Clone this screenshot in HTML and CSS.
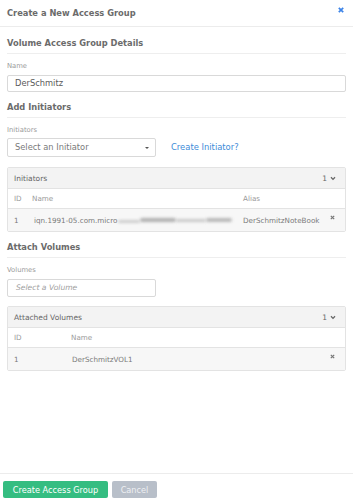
FILE: index.html
```html
<!DOCTYPE html>
<html>
<head>
<meta charset="utf-8">
<link rel="stylesheet" href="styles.css">
</head>
<body>
<div class="dialog">
  <div class="dlg-head">
    <span class="dlg-title">Create a New Access Group</span>
    <svg class="close" width="6" height="6" viewBox="0 0 6 6"><path d="M0.8 0.8 L5.2 5.2 M5.2 0.8 L0.8 5.2" stroke="#3d84e8" stroke-width="1.7"/></svg>
  </div>
  <div class="dlg-body">
    <div class="section-title">Volume Access Group Details</div>
    <div class="label">Name</div>
    <div class="input full">DerSchmitz</div>

    <div class="section-title">Add Initiators</div>
    <div class="label">Initiators</div>
    <div class="row">
      <div class="input select">Select an Initiator<span class="caret"></span></div>
      <a class="link">Create Initiator?</a>
    </div>
    <div class="panel ini-panel">
      <div class="panel-head"><span>Initiators</span><span class="count">1 <svg width="6" height="5" viewBox="0 0 6 5"><path d="M1 1.2 L3 3.4 L5 1.2" fill="none" stroke="#666" stroke-width="1.3"/></svg></span></div>
      <div class="trow cols ini"><span>ID</span><span>Name</span><span>Alias</span><span></span></div>
      <div class="trow data ini"><span>1</span><span class="iqn">iqn.1991-05.com.micro<span class="blur"><span class="b1"></span><span class="b2"></span><span class="b3"></span><span class="b4"></span></span></span><span>DerSchmitzNoteBook</span><svg class="x" width="5" height="5" viewBox="0 0 5 5"><path d="M0.8 0.8 L4.2 4.2 M4.2 0.8 L0.8 4.2" stroke="#777" stroke-width="1.2"/></svg></div>
    </div>

    <div class="section-title">Attach Volumes</div>
    <div class="label">Volumes</div>
    <div class="input select placeholder">Select a Volume</div>
    <div class="panel vol-panel">
      <div class="panel-head"><span>Attached Volumes</span><span class="count">1 <svg width="6" height="5" viewBox="0 0 6 5"><path d="M1 1.2 L3 3.4 L5 1.2" fill="none" stroke="#666" stroke-width="1.3"/></svg></span></div>
      <div class="trow cols vol"><span>ID</span><span>Name</span><span></span></div>
      <div class="trow data vol"><span>1</span><span>DerSchmitzVOL1</span><svg class="x" width="5" height="5" viewBox="0 0 5 5"><path d="M0.8 0.8 L4.2 4.2 M4.2 0.8 L0.8 4.2" stroke="#777" stroke-width="1.2"/></svg></div>
    </div>
  </div>
  <div class="dlg-foot">
    <button class="btn primary">Create Access Group</button>
    <button class="btn cancel">Cancel</button>
  </div>
</div>
</body>
</html>
```
FILE: styles.css
```css
html, body { margin: 0; padding: 0; background: #fff; }
body { font-family: "DejaVu Sans", "Liberation Sans", sans-serif; color: #666; }
.dialog { width: 353px; height: 500px; display: flex; flex-direction: column; }
.dlg-head { height: 27px; border-bottom: 1px solid #ececec; display: flex; align-items: center; justify-content: space-between; padding: 0 9px 0 7px; box-sizing: border-box; }
.dlg-title { font-weight: 700; font-size: 8.3px; color: #6b6b6b; line-height: 12px; }
.close { margin-top: -7px; }
.dlg-body { padding: 1px 7px 0; flex: 1; }
.section-title { font-weight: 700; font-size: 8.3px; color: #6b6b6b; line-height: 12px; padding-top: 9px; padding-bottom: 4px; border-bottom: 1px solid #eeeeee; margin-bottom: 8px; }
.label { font-size: 6.8px; line-height: 9px; color: #9a9a9a; margin-bottom: 3.5px; }
.input { height: 17px; border: 1px solid #d9d9d9; border-radius: 2px; box-sizing: border-box; font-size: 8.3px; color: #5a5a5a; padding-left: 7px; display: flex; align-items: center; }
.input.full { width: 100%; }
.input.select { width: 149px; height: 18.5px; color: #7a7a7a; position: relative; }
.input.placeholder { font-style: italic; color: #a0a0a0; font-size: 7.6px; padding-left: 8px; }
.caret { position: absolute; right: 6px; top: 7.5px; border-left: 2.2px solid transparent; border-right: 2.2px solid transparent; border-top: 2.6px solid #555; }
.row { display: flex; align-items: center; }
.link { color: #3d8bd8; font-size: 8.4px; margin-left: 15px; }
.panel { border: 1px solid #e3e3e3; border-radius: 2px; font-size: 7.2px; color: #7a7a7a; }
.ini-panel { margin-top: 10.5px; }
.vol-panel { margin-top: 9px; }
.panel-head { height: 20px; background: #f3f3f3; display: flex; align-items: center; justify-content: space-between; padding: 0 9px 0 6px; border-bottom: 1px solid #e3e3e3; color: #666; font-size: 7.5px; }
.count { display: flex; align-items: center; gap: 3px; }
.trow { display: grid; align-items: center; padding: 0 6px; }
.trow.ini { grid-template-columns: 18px 211px 1fr 9px; }
.trow.vol { grid-template-columns: 57px 1fr 9px; }
.trow.cols { height: 19px; border-bottom: 1px solid #e3e3e3; color: #9a9a9a; }
.trow.data { height: 22px; background: #f7f7f7; }
.ini.data span:nth-child(2) { padding-left: 2px; }
.vol.data span:nth-child(2) { padding-left: 1px; }
.iqn { display: flex; align-items: center; white-space: nowrap; }
.blur { display: inline-flex; align-items: center; width: 118px; height: 8px; }
.blur span { display: block; background: #a9a9a9; border-radius: 3px; filter: blur(1.4px); }
.b1 { width: 22px; height: 3px; margin-top: 3px; opacity: 0.55; }
.b2 { width: 34px; height: 4px; margin-top: -1px; opacity: 0.9; }
.b3 { width: 30px; height: 3px; margin-top: 1px; opacity: 0.6; }
.b4 { width: 26px; height: 4px; margin-top: 0; opacity: 0.8; }
.x { margin-top: -5px; }
.dlg-foot { border-top: 1px solid #ececec; height: 27px; box-sizing: border-box; display: flex; align-items: flex-start; padding: 7px 3px 0; gap: 4px; }
.btn { border: none; border-radius: 2px; height: 17px; font-family: "DejaVu Sans", "Liberation Sans", sans-serif; font-size: 8.2px; color: #fff; padding: 0; }
.btn.primary { background: #35bd81; width: 105px; }
.btn.cancel { background: #b8bfc9; width: 45px; color: #eef0f3; }
```
